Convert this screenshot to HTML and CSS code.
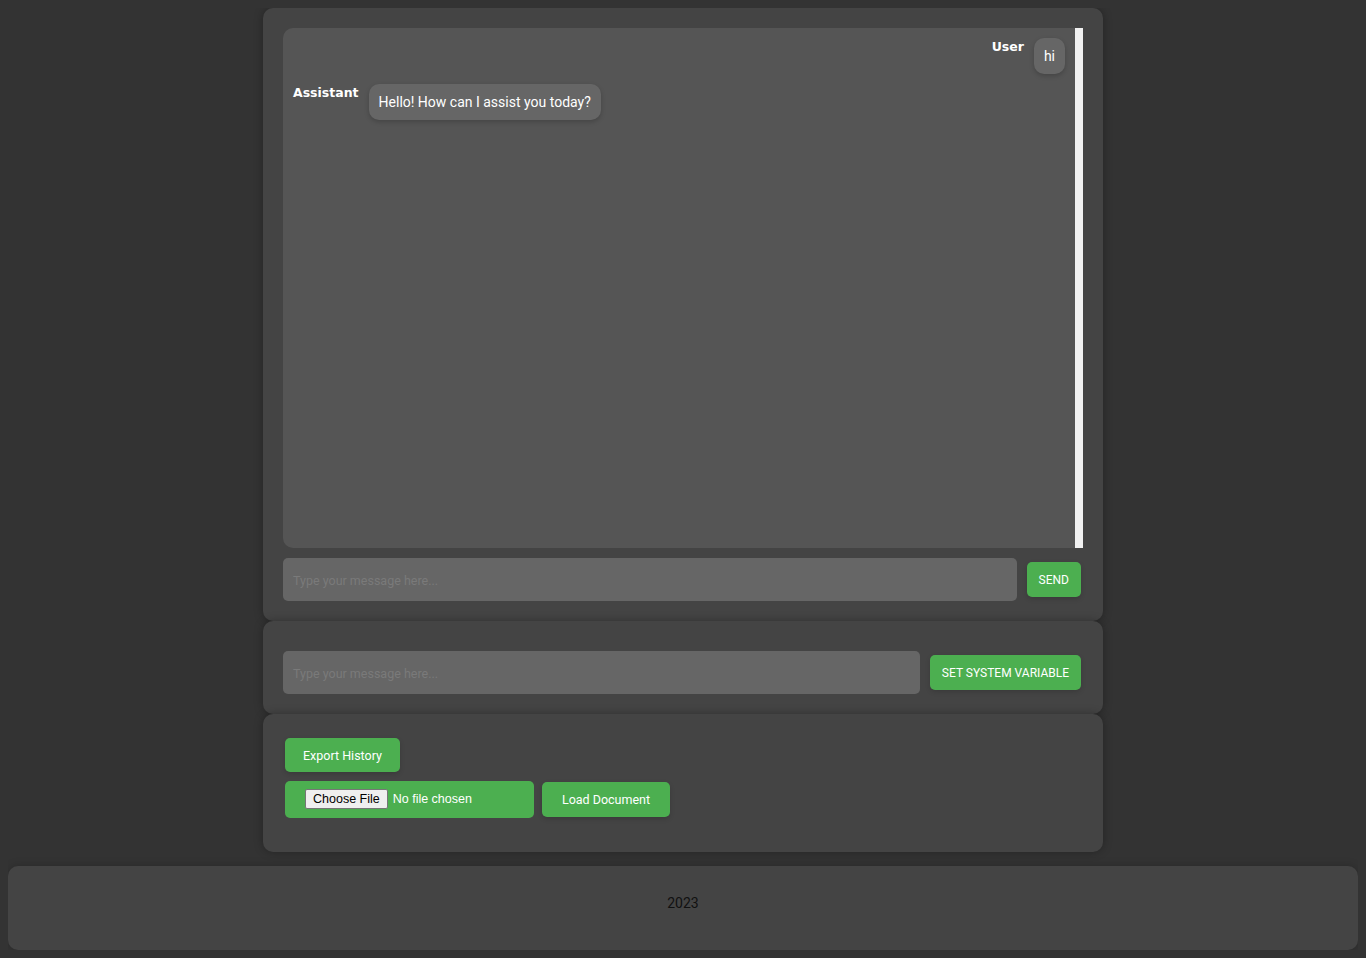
FILE: index.html
```html
<!DOCTYPE html>
<html>
<head>
<meta charset="utf-8">
<link rel="stylesheet" href="styles.css">
</head>
<body>
<div class="container">
  <div class="card chat-card">
    <div class="chat-box">
      <div class="message user">
        <span class="label">User</span>
        <div class="bubble">hi</div>
      </div>
      <div class="message assistant">
        <span class="label">Assistant</span>
        <div class="bubble">Hello! How can I assist you today?</div>
      </div>
    </div>
    <div class="input-row">
      <input class="text-input" type="text" placeholder="Type your message here...">
      <button class="btn btn-caps">SEND</button>
    </div>
  </div>
  <div class="card system-card">
    <div class="input-row">
      <input class="text-input" type="text" placeholder="Type your message here...">
      <button class="btn btn-caps">SET SYSTEM VARIABLE</button>
    </div>
  </div>
  <div class="card doc-card">
    <button class="btn btn-wide export">Export History</button>
    <div class="file-row">
      <input class="file-input" type="file">
      <button class="btn btn-wide load">Load Document</button>
    </div>
  </div>
</div>
<footer class="footer">
  <p>2023</p>
</footer>
</body>
</html>
```
FILE: styles.css
```css
body {
  margin: 8px;
  background: #333333;
  font-family: Roboto, "Liberation Sans", sans-serif;
  font-size: 14px;
  color: #ffffff;
}

.container {
  width: 840px;
  margin: 0 auto;
}

.card {
  background: #444444;
  border-radius: 10px;
  padding: 20px;
  box-sizing: border-box;
  box-shadow: 0 0 10px rgba(0, 0, 0, 0.3);
}

.chat-box {
  height: 520px;
  background: #555555;
  border-radius: 10px 0 0 10px;
  border-right: 8px solid #f1f1f1;
  padding: 10px;
  box-sizing: border-box;
  overflow: hidden;
  margin-bottom: 10px;
}

.message {
  display: flex;
  align-items: flex-start;
  gap: 10px;
  margin-bottom: 10px;
}

.message.user {
  justify-content: flex-end;
}

.label {
  font-family: "DejaVu Sans", Verdana, sans-serif;
  font-weight: bold;
  font-size: 12.5px;
  line-height: 16px;
  padding-top: 1px;
  color: #ffffff;
}

.bubble {
  background: #666666;
  color: #ffffff;
  padding: 10px;
  border-radius: 10px;
  font-size: 14px;
  line-height: 16px;
  box-shadow: 0 2px 5px rgba(0, 0, 0, 0.2);
}

.input-row {
  display: flex;
  align-items: center;
  gap: 10px;
}

.text-input {
  flex: 1;
  height: 43px;
  box-sizing: border-box;
  background: #666666;
  border: none;
  border-radius: 5px;
  padding: 1px 10px 0;
  font-family: Roboto, "Liberation Sans", sans-serif;
  font-size: 12.5px;
  color: #ffffff;
  outline: none;
}

.text-input::placeholder {
  color: #7a7a7a;
}

.btn {
  background: #4caf50;
  color: #ffffff;
  border: none;
  border-radius: 5px;
  height: 35px;
  font-family: Roboto, "Liberation Sans", sans-serif;
  font-size: 12px;
  white-space: nowrap;
  box-shadow: 0 2px 5px rgba(0, 0, 0, 0.15);
}

.btn-caps {
  padding: 0 12px;
  margin-right: 2px;
}

.system-card {
  padding: 30px 20px 20px;
}

.doc-card {
  padding: 24px 22px 34px;
}

.btn-wide {
  padding: 0 20px;
  font-size: 12.5px;
}

.export {
  height: 34px;
  display: block;
  padding: 0 18px;
}

.file-row {
  display: flex;
  align-items: center;
  gap: 8px;
  margin-top: 9px;
}

.file-input {
  width: 249px;
  height: 37px;
  box-sizing: border-box;
  background: #4caf50;
  color: #ffffff;
  border-radius: 5px;
  padding: 0 20px;
  font-family: "Liberation Sans", Arial, sans-serif;
  font-size: 12.5px;
  line-height: 37px;
}

.file-input::file-selector-button {
  font-family: "Liberation Sans", Arial, sans-serif;
  font-size: 12.5px;
  background: #efefef;
  color: #000000;
  border: 1px solid #767676;
  border-radius: 2px;
  padding: 2px 7px;
  margin-right: 5px;
}

.load {
  width: 128px;
  padding: 0;
}

.footer {
  margin-top: 14px;
  background: #444444;
  border-radius: 10px;
  padding: 20px;
  text-align: center;
  color: #111111;
  box-shadow: 0 0 10px rgba(0, 0, 0, 0.2);
}

.footer p {
  margin: 9px 0 19px;
  line-height: 16px;
}
```
